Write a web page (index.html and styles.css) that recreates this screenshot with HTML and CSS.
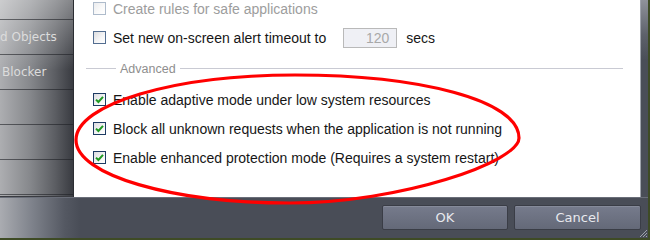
FILE: index.html
```html
<!DOCTYPE html>
<html>
<head>
<meta charset="utf-8">
<link rel="stylesheet" href="styles.css">
</head>
<body>
<div class="window">
  <div class="top">
    <nav class="sidebar">
      <div class="nav-item first"></div>
      <div class="nav-item"><span class="shift-a">d Objects</span></div>
      <div class="nav-item"><span class="shift-b">Blocker</span></div>
      <div class="nav-item"></div>
      <div class="nav-item"></div>
      <div class="nav-item"></div>
    </nav>
    <main class="panel">
      <div class="row first disabled">
        <span class="cb"></span>
        <span class="label">Create rules for safe applications</span>
      </div>
      <div class="row">
        <span class="cb"></span>
        <span class="label">Set new on-screen alert timeout to</span>
        <span class="num">120</span>
        <span class="label">secs</span>
      </div>
      <div class="legend"><span>Advanced</span></div>
      <div class="row">
        <span class="cb checked"><svg viewBox="0 0 11 11" width="11" height="11"><path d="M2 5.6 L4.4 8 L9 2.8" fill="none" stroke="#1f9a22" stroke-width="2"/></svg></span>
        <span class="label">Enable adaptive mode under low system resources</span>
      </div>
      <div class="row">
        <span class="cb checked"><svg viewBox="0 0 11 11" width="11" height="11"><path d="M2 5.6 L4.4 8 L9 2.8" fill="none" stroke="#1f9a22" stroke-width="2"/></svg></span>
        <span class="label">Block all unknown requests when the application is not running</span>
      </div>
      <div class="row">
        <span class="cb checked"><svg viewBox="0 0 11 11" width="11" height="11"><path d="M2 5.6 L4.4 8 L9 2.8" fill="none" stroke="#1f9a22" stroke-width="2"/></svg></span>
        <span class="label">Enable enhanced protection mode (Requires a system restart)</span>
      </div>
    </main>
    <div class="edge"></div>
  </div>
  <footer class="footer">
    <button class="btn ok">OK</button>
    <button class="btn cancel">Cancel</button>
    <svg class="grip" viewBox="0 0 10 10" width="10" height="10"><path d="M9 2 L2 9 M9 5 L5 9 M9 8 L8 9" stroke="#9ea2ac" stroke-width="1"/></svg>
  </footer>
</div>
<svg class="highlight" width="650" height="240" viewBox="0 0 650 240">
  <path d="M76 140 C76 104 174 75 295 75 C419 75 519 100 519 138 C519 162 400 203 290 203 C172 203 76 175 76 140 Z" fill="none" stroke="#ff0000" stroke-width="3.2"/>
</svg>
</body>
</html>
```

FILE: styles.css
```css
html, body {
  margin: 0;
  padding: 0;
}

body {
  width: 650px;
  height: 240px;
  overflow: hidden;
  position: relative;
  background: #3e4b25;
  font-family: "Liberation Sans", Arial, sans-serif;
}

.window {
  width: 648px;
  height: 238px;
  display: flex;
  flex-direction: column;
  background: #494d57;
}

.top {
  display: flex;
  height: 197px;
  flex: none;
}

.sidebar {
  width: 73px;
  flex: none;
  border-right: 1px solid #2b2d32;
  overflow: hidden;
  display: flex;
  flex-direction: column;
  background:
    linear-gradient(to bottom, rgba(255,255,255,0.38) 0, rgba(255,255,255,0) 70px),
    linear-gradient(to right, #adaeb1 0, #86888c 30px, #5c5e63 55px, #393b41 73px);
  box-shadow: inset 0 -3px 0 -2px #3a3c41;
}

.nav-item {
  height: 34px;
  flex: none;
  border-bottom: 1px solid rgba(30, 31, 36, 0.6);
  display: flex;
  align-items: center;
  font-family: "DejaVu Sans", Verdana, sans-serif;
  font-size: 12px;
  color: #dcdcdc;
  white-space: nowrap;
}

.nav-item.first {
  margin-top: -15px;
}

.shift-a {
  margin-left: 0;
}

.shift-b {
  margin-left: 2px;
}

.panel {
  flex: 1;
  background: #ffffff;
  overflow: hidden;
  padding: 0 17px 0 19px;
  display: flex;
  flex-direction: column;
}

.row {
  height: 29px;
  flex: none;
  display: flex;
  align-items: center;
  white-space: nowrap;
}

.row.first {
  margin-top: -6px;
}

.cb {
  width: 13px;
  height: 13px;
  box-sizing: border-box;
  flex: none;
  margin-right: 7px;
  border: 1px solid #536d90;
  background: linear-gradient(135deg, #dcdde0 0, #f6f6f7 60%, #ffffff 100%);
  display: flex;
  align-items: center;
  justify-content: center;
}

.cb.checked {
  border-color: #1d3b63;
}

.cb svg {
  display: block;
}

.label {
  font-size: 14px;
  color: #161616;
}

.disabled .cb {
  border-color: #aebbcb;
  background: linear-gradient(135deg, #ebecee 0, #fafafa 60%, #ffffff 100%);
}

.disabled .label {
  color: #9d9d9d;
}

.num {
  width: 54px;
  height: 20px;
  box-sizing: border-box;
  border: 1px solid #b9b9b9;
  background: #eff0f5;
  color: #a8a8a8;
  font-size: 14px;
  line-height: 18px;
  text-align: right;
  padding-right: 7px;
  margin: 0 9px 0 17px;
}

.legend {
  height: 33px;
  flex: none;
  margin-left: -7px;
  display: flex;
  align-items: center;
  gap: 4px;
  font-size: 12.5px;
  color: #8e8e8e;
}

.legend::before {
  content: "";
  width: 30px;
  height: 1px;
  background: #c9cad3;
}

.legend::after {
  content: "";
  flex: 1;
  height: 1px;
  background: #c9cad3;
}

.edge {
  width: 7px;
  flex: none;
  border-left: 1px solid #a0a4ad;
  background: linear-gradient(to bottom, #8f929a 0, #5d616b 35px, #4a4e58 60px);
}

.footer {
  height: 41px;
  flex: none;
  box-sizing: border-box;
  position: relative;
  border-top: 1px solid #6a6e79;
  background: linear-gradient(to right, #aaacb1 0, #7d818a 33px, #545862 65px, #494d57 80px);
  display: flex;
  justify-content: flex-end;
  align-items: flex-start;
  gap: 6px;
  padding: 7px 7px 0 0;
}

.btn {
  height: 25px;
  box-sizing: border-box;
  border: 1px solid #3a3d46;
  border-radius: 2px;
  background: linear-gradient(to bottom, #767b8c, #646978);
  box-shadow: inset 0 1px 0 rgba(255,255,255,0.12);
  color: #e8e9ee;
  font-family: "DejaVu Sans", Verdana, sans-serif;
  font-size: 13px;
  padding: 0;
  margin: 0;
}

.btn.ok {
  width: 126px;
}

.btn.cancel {
  width: 127px;
}

.grip {
  position: absolute;
  right: 0;
  bottom: 0;
}

.highlight {
  position: absolute;
  left: 0;
  top: 0;
  pointer-events: none;
}
```
